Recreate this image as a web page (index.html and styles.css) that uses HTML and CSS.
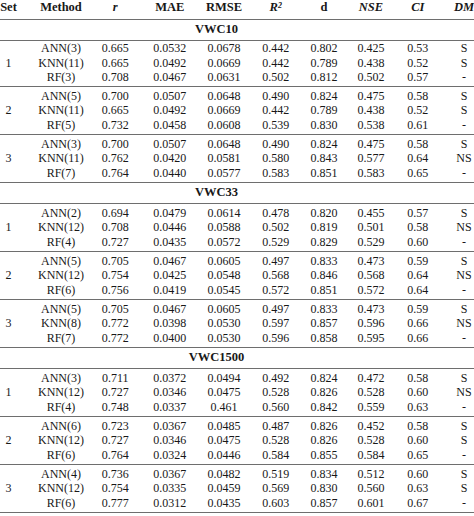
FILE: index.html
```html
<!DOCTYPE html>
<html>
<head>
<meta charset="utf-8">
<link rel="stylesheet" href="styles.css">
</head>
<body>
<div class="tbl">
  <div class="cols head">
    <div>Set</div><div>Method</div><div class="it">r</div><div>MAE</div><div>RMSE</div><div class="it">R<sup>2</sup></div><div>d</div><div class="it">NSE</div><div class="it">CI</div><div class="it">DM</div>
  </div>

  <div class="sect">VWC10</div>
  <div class="cols grp first">
    <div class="set">1</div>
    <div>ANN(3)</div><div>0.665</div><div>0.0532</div><div>0.0678</div><div>0.442</div><div>0.802</div><div>0.425</div><div>0.53</div><div>S</div>
    <div>KNN(11)</div><div>0.665</div><div>0.0492</div><div>0.0669</div><div>0.442</div><div>0.789</div><div>0.438</div><div>0.52</div><div>S</div>
    <div>RF(3)</div><div>0.708</div><div>0.0467</div><div>0.0631</div><div>0.502</div><div>0.812</div><div>0.502</div><div>0.57</div><div>-</div>
  </div>
  <div class="cols grp">
    <div class="set">2</div>
    <div>ANN(5)</div><div>0.700</div><div>0.0507</div><div>0.0648</div><div>0.490</div><div>0.824</div><div>0.475</div><div>0.58</div><div>S</div>
    <div>KNN(11)</div><div>0.665</div><div>0.0492</div><div>0.0669</div><div>0.442</div><div>0.789</div><div>0.438</div><div>0.52</div><div>S</div>
    <div>RF(5)</div><div>0.732</div><div>0.0458</div><div>0.0608</div><div>0.539</div><div>0.830</div><div>0.538</div><div>0.61</div><div>-</div>
  </div>
  <div class="cols grp">
    <div class="set">3</div>
    <div>ANN(3)</div><div>0.700</div><div>0.0507</div><div>0.0648</div><div>0.490</div><div>0.824</div><div>0.475</div><div>0.58</div><div>S</div>
    <div>KNN(11)</div><div>0.762</div><div>0.0420</div><div>0.0581</div><div>0.580</div><div>0.843</div><div>0.577</div><div>0.64</div><div>NS</div>
    <div>RF(7)</div><div>0.764</div><div>0.0440</div><div>0.0577</div><div>0.583</div><div>0.851</div><div>0.583</div><div>0.65</div><div>-</div>
  </div>

  <div class="sect">VWC33</div>
  <div class="cols grp">
    <div class="set">1</div>
    <div>ANN(2)</div><div>0.694</div><div>0.0479</div><div>0.0614</div><div>0.478</div><div>0.820</div><div>0.455</div><div>0.57</div><div>S</div>
    <div>KNN(12)</div><div>0.708</div><div>0.0446</div><div>0.0588</div><div>0.502</div><div>0.819</div><div>0.501</div><div>0.58</div><div>NS</div>
    <div>RF(4)</div><div>0.727</div><div>0.0435</div><div>0.0572</div><div>0.529</div><div>0.829</div><div>0.529</div><div>0.60</div><div>-</div>
  </div>
  <div class="cols grp">
    <div class="set">2</div>
    <div>ANN(5)</div><div>0.705</div><div>0.0467</div><div>0.0605</div><div>0.497</div><div>0.833</div><div>0.473</div><div>0.59</div><div>S</div>
    <div>KNN(12)</div><div>0.754</div><div>0.0425</div><div>0.0548</div><div>0.568</div><div>0.846</div><div>0.568</div><div>0.64</div><div>NS</div>
    <div>RF(6)</div><div>0.756</div><div>0.0419</div><div>0.0545</div><div>0.572</div><div>0.851</div><div>0.572</div><div>0.64</div><div>-</div>
  </div>
  <div class="cols grp">
    <div class="set">3</div>
    <div>ANN(5)</div><div>0.705</div><div>0.0467</div><div>0.0605</div><div>0.497</div><div>0.833</div><div>0.473</div><div>0.59</div><div>S</div>
    <div>KNN(8)</div><div>0.772</div><div>0.0398</div><div>0.0530</div><div>0.597</div><div>0.857</div><div>0.596</div><div>0.66</div><div>NS</div>
    <div>RF(7)</div><div>0.772</div><div>0.0400</div><div>0.0530</div><div>0.596</div><div>0.858</div><div>0.595</div><div>0.66</div><div>-</div>
  </div>

  <div class="sect">VWC1500</div>
  <div class="cols grp">
    <div class="set">1</div>
    <div>ANN(3)</div><div>0.711</div><div>0.0372</div><div>0.0494</div><div>0.492</div><div>0.824</div><div>0.472</div><div>0.58</div><div>S</div>
    <div>KNN(12)</div><div>0.727</div><div>0.0346</div><div>0.0475</div><div>0.528</div><div>0.826</div><div>0.528</div><div>0.60</div><div>NS</div>
    <div>RF(4)</div><div>0.748</div><div>0.0337</div><div>0.461</div><div>0.560</div><div>0.842</div><div>0.559</div><div>0.63</div><div>-</div>
  </div>
  <div class="cols grp">
    <div class="set">2</div>
    <div>ANN(6)</div><div>0.723</div><div>0.0367</div><div>0.0485</div><div>0.487</div><div>0.826</div><div>0.452</div><div>0.58</div><div>S</div>
    <div>KNN(12)</div><div>0.727</div><div>0.0346</div><div>0.0475</div><div>0.528</div><div>0.826</div><div>0.528</div><div>0.60</div><div>S</div>
    <div>RF(6)</div><div>0.764</div><div>0.0324</div><div>0.0446</div><div>0.584</div><div>0.855</div><div>0.584</div><div>0.65</div><div>-</div>
  </div>
  <div class="cols grp">
    <div class="set">3</div>
    <div>ANN(4)</div><div>0.736</div><div>0.0367</div><div>0.0482</div><div>0.519</div><div>0.834</div><div>0.512</div><div>0.60</div><div>S</div>
    <div>KNN(12)</div><div>0.754</div><div>0.0335</div><div>0.0459</div><div>0.569</div><div>0.830</div><div>0.560</div><div>0.63</div><div>S</div>
    <div>RF(6)</div><div>0.777</div><div>0.0312</div><div>0.0435</div><div>0.603</div><div>0.857</div><div>0.601</div><div>0.67</div><div>-</div>
  </div>
</div>
</body>
</html>
```

FILE: styles.css
```css
html, body {
  margin: 0;
  padding: 0;
  background: #ffffff;
}
body {
  width: 474px;
  height: 516px;
  overflow: hidden;
  font-family: "Liberation Serif", "Times New Roman", serif;
  color: #181818;
}
.tbl {
  width: 504px;
  margin-left: -17px;
}
.cols {
  display: grid;
  grid-template-columns: 51px 54px 54.5px 54.5px 54px 49.5px 47px 47px 46.5px 46px;
  text-align: center;
  white-space: nowrap;
}
.head {
  height: 19px;
  line-height: 15px;
  font-size: 12.5px;
  font-weight: bold;
  border-bottom: 1px solid #6e6e6e;
}
.head .it {
  font-style: italic;
}
.head sup {
  font-size: 8px;
  line-height: 0;
  vertical-align: 3.5px;
}
.sect {
  height: 20px;
  line-height: 18px;
  font-size: 12.5px;
  font-weight: bold;
  text-align: center;
  padding-right: 37px;
  border-bottom: 1px solid #6e6e6e;
}
.grp {
  height: 48px;
  box-sizing: border-box;
  padding-top: 1.5px;
  grid-template-rows: 14.5px 14.5px 14.5px;
  line-height: 14.5px;
  font-size: 12px;
  border-bottom: 1px solid #6e6e6e;
}
.grp.first {
  height: 46px;
  padding-top: 0;
}
.set {
  grid-row: 1 / 4;
  align-self: center;
}
```
